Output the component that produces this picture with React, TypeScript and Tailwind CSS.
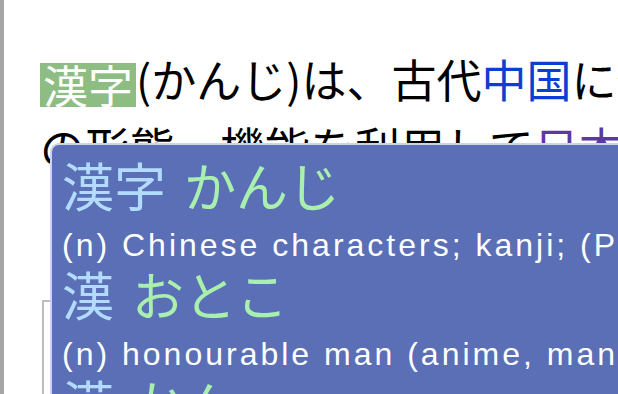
export default function App() {
  const jp = { fontFamily: '"Noto Sans CJK JP", "Noto Sans", sans-serif' };
  const en = { fontFamily: '"Liberation Sans", Arial, sans-serif' };

  const entries = [
    { kanji: '漢字', kana: 'かんじ', def: '(n) Chinese characters; kanji; (P)' },
    { kanji: '漢', kana: 'おとこ', def: '(n) honourable man (anime, manner)' },
    { kanji: '漢', kana: 'かん', def: '(n) China; Han dynasty' },
  ];

  return (
    <div className="relative w-[618px] h-[394px] overflow-hidden bg-white flex">
      {/* left window edge */}
      <div className="w-[4px] h-full bg-[#a6a6a6] shrink-0" />

      <div className="flex-1 pl-[36px] pt-[45px] text-black whitespace-nowrap" style={jp}>
        <div className="text-[45px] leading-[68px]">
          <span className="inline-block bg-[#8dbd82] text-white leading-[44px] h-[44px] px-[3px] align-[-6px]">
            漢字
          </span>
          (かんじ)は、古代<span className="text-[#0a3fd0]">中国</span>に発祥を持つ
        </div>
        <div className="text-[45px] leading-[68px]">
          の形態、機能を利用して<span className="text-[#5a3aa0]">日本語</span>
        </div>
        <div className="mt-[119px] ml-[2px] h-[200px] border-l-2 border-t-2 border-[#bdbdbd]" />
      </div>

      {/* rikaichan popup */}
      <div className="absolute left-[50px] top-[143px] w-[700px] h-[400px] bg-[#5a6fb6] border-l-2 border-t-2 border-[#cfd3e6] rounded-tl-[9px] pl-[10px] pt-[9px] whitespace-nowrap">
        {entries.map((e, i) => (
          <div key={i}>
            <div className="h-[62px] leading-[62px] text-[52px]" style={jp}>
              <span className="text-[#b3dbff]">{e.kanji}</span>
              <span className="text-[#a9f0ae] ml-[18px]">{e.kana}</span>
            </div>
            <div className="mt-[11px] h-[36px] leading-[36px] text-[32px] tracking-[3px] text-white" style={en}>
              {e.def}
            </div>
          </div>
        ))}
      </div>
    </div>
  );
}
